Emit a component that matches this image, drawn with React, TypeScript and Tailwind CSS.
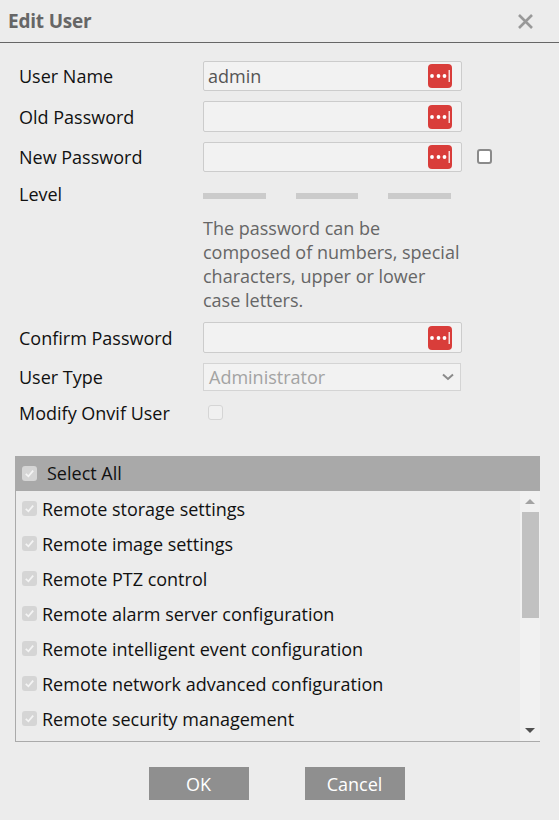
function KeyIcon() {
  return (
    <svg width="24" height="24" viewBox="0 0 24 24" className="shrink-0">
      <rect width="24" height="24" rx="4" fill="#d93d3a" />
      <circle cx="4" cy="12" r="1.9" fill="#fff" />
      <circle cx="10.5" cy="12" r="1.9" fill="#fff" />
      <circle cx="16.5" cy="12" r="1.9" fill="#fff" />
      <rect x="20.6" y="6" width="1.2" height="12" fill="#fff" />
    </svg>
  );
}

function PwField({ value, h }: { value?: string; h: string }) {
  return (
    <div className={`w-[259px] ${h} flex items-center justify-between pl-[4px] pr-[9px] bg-[#f2f2f2] border border-[#cccccc] rounded-[2px] text-[18px] text-[#555555]`}>
      <span>{value}</span>
      <KeyIcon />
    </div>
  );
}

function Check() {
  return (
    <span className="w-[15px] h-[15px] shrink-0 rounded-[3px] bg-[#d5d5d5] flex items-center justify-center">
      <svg width="11" height="11" viewBox="0 0 11 11">
        <path d="M1.8 5.8 L4.4 8.3 L9.2 2.6" fill="none" stroke="#f4f4f4" strokeWidth="1.7" />
      </svg>
    </span>
  );
}

const items = [
  "Remote storage settings",
  "Remote image settings",
  "Remote PTZ control",
  "Remote alarm server configuration",
  "Remote intelligent event configuration",
  "Remote network advanced configuration",
  "Remote security management",
];

export default function App() {
  return (
    <div className="w-[559px] h-[820px] bg-[#ececec] overflow-hidden font-['Open_Sans',sans-serif] text-[18px] text-[#111111]">
      <div className="h-[43px] border-b border-[#666666] flex items-center justify-between pl-[8px] pr-[26px]">
        <span className="text-[19px] font-bold text-[#666666] tracking-[-0.2px]">Edit User</span>
        <svg width="15" height="15" viewBox="0 0 15 15">
          <path d="M1 1 L14 14 M14 1 L1 14" stroke="#999999" strokeWidth="2.6" />
        </svg>
      </div>

      <div className="pt-[18px] pl-[19px]">
        <div className="flex flex-col gap-[10px]">
          <div className="flex items-center">
            <span className="w-[184px]">User Name</span>
            <PwField value="admin" h="h-[30px]" />
          </div>
          <div className="flex items-center">
            <span className="w-[184px] pt-[1px]">Old Password</span>
            <PwField h="h-[31px]" />
          </div>
          <div className="flex items-center">
            <span className="w-[184px]">New Password</span>
            <PwField h="h-[30px]" />
            <span className="ml-[15px] w-[15px] h-[15px] bg-white border-2 border-[#8a8a8a] rounded-[3px] mb-[2px]" />
          </div>
        </div>

        <div className="flex items-center h-[24px] mt-[10px]">
          <span className="w-[184px]">Level</span>
          <div className="flex gap-[30px] mt-[4px]">
            <span className="w-[63px] h-[6px] bg-[#cbcbcb]" />
            <span className="w-[62px] h-[6px] bg-[#cbcbcb]" />
            <span className="w-[63px] h-[6px] bg-[#cbcbcb]" />
          </div>
        </div>

        <p className="ml-[184px] mt-[10px] w-[260px] leading-[24px] text-[#666666]">
          The password can be composed of numbers, special characters, upper or lower case letters.
        </p>

        <div className="flex items-center mt-[10px]">
          <span className="w-[184px] pt-[1px]">Confirm Password</span>
          <PwField h="h-[31px]" />
        </div>

        <div className="flex items-center mt-[10px]">
          <span className="w-[184px]">User Type</span>
          <div className="w-[258px] h-[28px] flex items-center justify-between pl-[5px] pr-[6px] bg-[#f2f2f2] border border-[#d4d4d4] text-[#a3a3a3]">
            <span>Administrator</span>
            <svg width="12" height="8" viewBox="0 0 12 8">
              <path d="M1 1.5 L6 6 L11 1.5" fill="none" stroke="#8a8a8a" strokeWidth="2" />
            </svg>
          </div>
        </div>

        <div className="flex items-center mt-[8px] h-[26px]">
          <span className="w-[189px] pt-[2px]">Modify Onvif User</span>
          <span className="w-[15px] h-[15px] bg-[#f0f0f0] border border-[#d5d5d5] rounded-[3px]" />
        </div>
      </div>

      <div className="mt-[31px] ml-[15px] w-[525px]">
        <div className="h-[35px] bg-[#a9a9a9] flex items-center pl-[7px]">
          <span className="mb-[1px]"><Check /></span>
          <span className="ml-[10px]">Select All</span>
        </div>
        <div className="h-[251px] border-l border-b border-[#aaaaaa] flex">
          <div className="flex-1 pl-[6px] pt-[1px]">
            {items.map((t) => (
              <div key={t} className="h-[35px] flex items-center gap-[5px]">
                <span className="mb-[2px]"><Check /></span>
                <span>{t}</span>
              </div>
            ))}
          </div>
          <div className="w-[20px] bg-[#f1f1f1] flex flex-col items-center">
            <div className="h-[21px] w-full flex items-center justify-center">
              <svg width="10" height="5" viewBox="0 0 10 5"><path d="M5 0 L10 5 L0 5 Z" fill="#a3a3a3" /></svg>
            </div>
            <div className="w-[17px] h-[106px] bg-[#c1c1c1]" />
            <div className="flex-1" />
            <div className="h-[21px] w-full flex items-center justify-center">
              <svg width="10" height="5" viewBox="0 0 10 5"><path d="M0 0 L10 0 L5 5 Z" fill="#505050" /></svg>
            </div>
          </div>
        </div>
      </div>

      <div className="mt-[25px] flex justify-center gap-[56px] pr-[6px]">
        <button className="w-[100px] h-[33px] pt-[1px] bg-[#8f8f8f] text-white">OK</button>
        <button className="w-[100px] h-[33px] pt-[1px] bg-[#8f8f8f] text-white">Cancel</button>
      </div>
    </div>
  );
}
